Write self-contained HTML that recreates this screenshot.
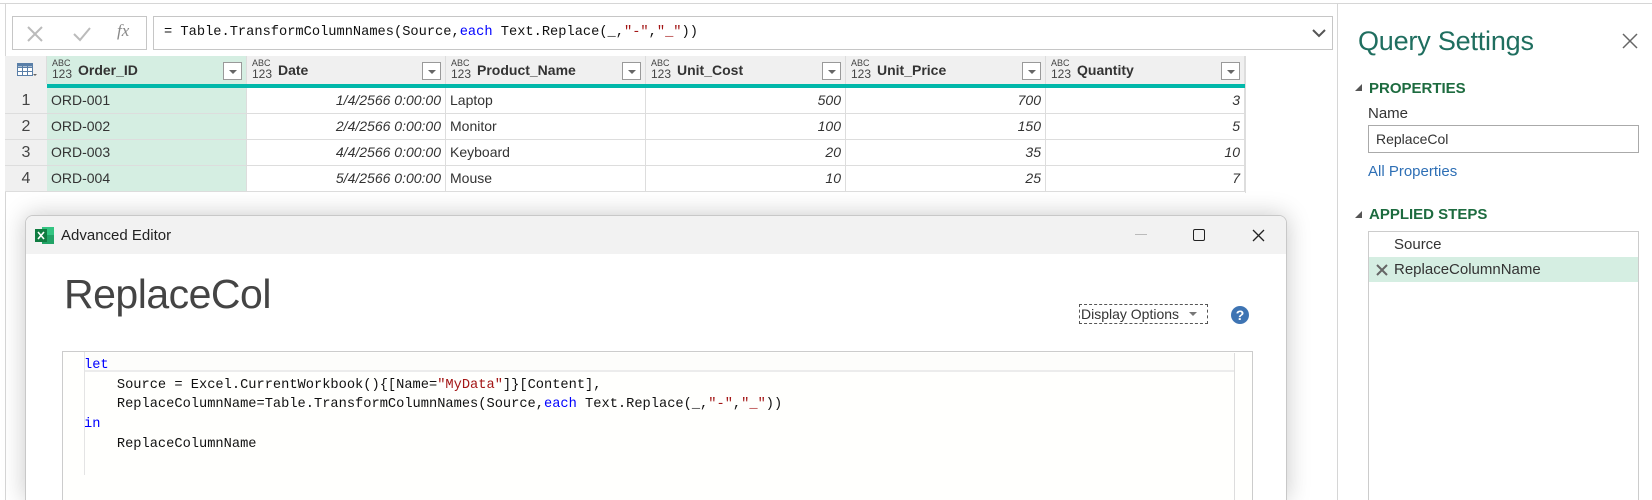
<!DOCTYPE html>
<html><head><meta charset="utf-8"><style>
*{box-sizing:border-box;margin:0;padding:0}
html,body{width:1652px;height:500px;overflow:hidden}
body{background:#fff;font-family:"Liberation Sans",sans-serif;position:relative;color:#222}
.a{position:absolute}
.mono{font-family:"Liberation Mono",monospace;font-size:13.7px;white-space:pre}
.kw{color:#0000ff}.str{color:#a31515}
.hd{position:absolute;top:56px;height:28px;background:#f0f0f0;border-right:1px solid #ddd}
.hd .t{position:absolute;left:5px;top:2px;font-size:9px;line-height:10px;color:#444}
.hd .t b{font-weight:normal;font-size:12px;line-height:12px}
.hd .n{position:absolute;left:31px;top:6px;font-weight:bold;font-size:14px;color:#333}
.hd .dd{position:absolute;right:4px;top:6px;width:19px;height:18px;border:1px solid #999;background:#fff}
.hd .dd:after{content:"";position:absolute;left:5px;top:7px;border-left:4px solid transparent;border-right:4px solid transparent;border-top:4px solid #666}
.cell{position:absolute;height:26px;border-right:1px solid #ddd;border-bottom:1px solid #ddd;font-size:14px;line-height:25px;padding:0 4px;color:#333}
.r{text-align:right;font-style:italic}
.rn{position:absolute;left:5px;width:42px;height:26px;background:#f0f0f0;border-bottom:1px solid #ddd;text-align:center;font-size:16px;line-height:26px;color:#444}
</style></head><body>
<div class="a" style="left:0;top:3px;width:1652px;height:1px;background:#d6d6d6"></div>
<div class="a" style="left:5px;top:3px;width:1px;height:497px;background:#d6d6d6"></div>
<div class="a" style="left:1337px;top:3px;width:1px;height:497px;background:#d6d6d6"></div>

<div class="a" style="left:12px;top:16px;width:135px;height:34px;border:1px solid #c6c6c6"></div>
<svg class="a" style="left:25px;top:24px" width="20" height="20"><path d="M3 3L17 17M17 3L3 17" stroke="#bbb" stroke-width="2"/></svg>
<svg class="a" style="left:72px;top:24px" width="20" height="20"><path d="M2 10L8 16L18 4" stroke="#bbb" stroke-width="2" fill="none"/></svg>
<div class="a" style="left:117px;top:21px;font-family:'Liberation Serif',serif;font-style:italic;font-size:17px;color:#888">fx</div>
<div class="a" style="left:153px;top:16px;width:1180px;height:34px;border:1px solid #c6c6c6"></div>
<div class="a mono" style="left:164px;top:25px;color:#111">= Table.TransformColumnNames(Source,<span class="kw">each</span> Text.Replace(_,<span class="str">"-"</span>,<span class="str">"_"</span>))</div>
<svg class="a" style="left:1311px;top:28px" width="16" height="10"><path d="M2 2L8 8L14 2" stroke="#555" stroke-width="2" fill="none"/></svg>

<div class="hd" style="left:5px;width:42px;border-right:1px solid #ddd">
<svg style="position:absolute;left:12px;top:7px" width="22" height="16"><rect x="0.5" y="0.5" width="15" height="12" fill="#fff" stroke="#5a7fa8"/><path d="M0.5 4.5H15.5M0.5 8.5H15.5M5.5 0.5V12.5M10.5 0.5V12.5" stroke="#5a7fa8"/><rect x="0.5" y="0.5" width="15" height="3" fill="#5a7fa8"/><path d="M16 11L20 11L18 13Z" fill="#666"/></svg></div>
<div class="hd" style="left:47px;width:200px;background:#d5eee2"><div class="t">ABC<br><b>123</b></div><div class="n">Order_ID</div><div class="dd"></div></div>
<div class="hd" style="left:247px;width:199px"><div class="t">ABC<br><b>123</b></div><div class="n">Date</div><div class="dd"></div></div>
<div class="hd" style="left:446px;width:200px"><div class="t">ABC<br><b>123</b></div><div class="n">Product_Name</div><div class="dd"></div></div>
<div class="hd" style="left:646px;width:200px"><div class="t">ABC<br><b>123</b></div><div class="n">Unit_Cost</div><div class="dd"></div></div>
<div class="hd" style="left:846px;width:200px"><div class="t">ABC<br><b>123</b></div><div class="n">Unit_Price</div><div class="dd"></div></div>
<div class="hd" style="left:1046px;width:199px"><div class="t">ABC<br><b>123</b></div><div class="n">Quantity</div><div class="dd"></div></div>
<div class="a" style="left:5px;top:84px;width:42px;height:4px;background:#f0f0f0"></div>
<div class="a" style="left:47px;top:84px;width:1198px;height:4px;background:#01b8aa"></div>
<div class="a" style="left:1245px;top:56px;width:1px;height:137px;background:#ddd"></div>

<div class="rn" style="top:88px">1</div><div class="rn" style="top:114px">2</div><div class="rn" style="top:140px">3</div><div class="rn" style="top:166px">4</div>

<div class="cell" style="left:47px;top:88px;width:200px;background:#d5eee2">ORD-001</div>
<div class="cell" style="left:47px;top:114px;width:200px;background:#d5eee2">ORD-002</div>
<div class="cell" style="left:47px;top:140px;width:200px;background:#d5eee2">ORD-003</div>
<div class="cell" style="left:47px;top:166px;width:200px;background:#d5eee2">ORD-004</div>
<div class="cell r" style="left:247px;top:88px;width:199px">1/4/2566 0:00:00</div>
<div class="cell r" style="left:247px;top:114px;width:199px">2/4/2566 0:00:00</div>
<div class="cell r" style="left:247px;top:140px;width:199px">4/4/2566 0:00:00</div>
<div class="cell r" style="left:247px;top:166px;width:199px">5/4/2566 0:00:00</div>
<div class="cell" style="left:446px;top:88px;width:200px">Laptop</div>
<div class="cell" style="left:446px;top:114px;width:200px">Monitor</div>
<div class="cell" style="left:446px;top:140px;width:200px">Keyboard</div>
<div class="cell" style="left:446px;top:166px;width:200px">Mouse</div>
<div class="cell r" style="left:646px;top:88px;width:200px">500</div>
<div class="cell r" style="left:646px;top:114px;width:200px">100</div>
<div class="cell r" style="left:646px;top:140px;width:200px">20</div>
<div class="cell r" style="left:646px;top:166px;width:200px">10</div>
<div class="cell r" style="left:846px;top:88px;width:200px">700</div>
<div class="cell r" style="left:846px;top:114px;width:200px">150</div>
<div class="cell r" style="left:846px;top:140px;width:200px">35</div>
<div class="cell r" style="left:846px;top:166px;width:200px">25</div>
<div class="cell r" style="left:1046px;top:88px;width:199px">3</div>
<div class="cell r" style="left:1046px;top:114px;width:199px">5</div>
<div class="cell r" style="left:1046px;top:140px;width:199px">10</div>
<div class="cell r" style="left:1046px;top:166px;width:199px">7</div>

<div class="a" style="left:1358px;top:26px;font-size:27px;color:#1f6e5f;letter-spacing:-0.2px">Query Settings</div>
<svg class="a" style="left:1622px;top:33px" width="16" height="16"><path d="M1 1L15 15M15 1L1 15" stroke="#666" stroke-width="1.5"/></svg>
<div class="a" style="left:1355px;top:84px;border-left:7px solid transparent;border-bottom:7px solid #555"></div>
<div class="a" style="left:1369px;top:80px;font-weight:bold;font-size:15px;color:#1d6b3f">PROPERTIES</div>
<div class="a" style="left:1368px;top:105px;font-size:15px;color:#333">Name</div>
<div class="a" style="left:1368px;top:125px;width:271px;height:28px;border:1px solid #aaa;padding:5px 7px;font-size:14px;color:#333">ReplaceCol</div>
<div class="a" style="left:1368px;top:163px;font-size:15px;color:#2e6fb5">All Properties</div>
<div class="a" style="left:1355px;top:211px;border-left:7px solid transparent;border-bottom:7px solid #555"></div>
<div class="a" style="left:1369px;top:206px;font-weight:bold;font-size:15px;color:#1d6b3f">APPLIED STEPS</div>
<div class="a" style="left:1368px;top:231px;width:271px;height:269px;border:1px solid #ccc;border-bottom:none"></div>
<div class="a" style="left:1394px;top:236px;font-size:15px;color:#333">Source</div>
<div class="a" style="left:1369px;top:257px;width:269px;height:25px;background:#d5eee2"></div>
<svg class="a" style="left:1375px;top:263px" width="14" height="14"><path d="M2 2L12 12M12 2L2 12" stroke="#666" stroke-width="2"/></svg>
<div class="a" style="left:1394px;top:261px;font-size:15px;color:#333">ReplaceColumnName</div>

<div class="a" style="left:25px;top:215px;width:1262px;height:285px;background:#fff;border:1px solid #c8c8c8;border-bottom:none;border-radius:8px 8px 0 0;box-shadow:0 0 24px rgba(0,0,0,0.22);overflow:hidden">
 <div class="a" style="left:0;top:0;width:1262px;height:38px;background:#f2f2f2"></div>
 <svg class="a" style="left:9px;top:10px" width="20" height="19"><rect x="7" y="1" width="12" height="17" fill="#21a366"/><rect x="7" y="1" width="12" height="8" fill="#33c481"/><rect x="0" y="3" width="12" height="13" fill="#107c41"/><path d="M3 6L9 13M9 6L3 13" stroke="#fff" stroke-width="1.6"/></svg>
 <div class="a" style="left:35px;top:11px;font-size:15px;color:#222">Advanced Editor</div>
 <div class="a" style="left:1109px;top:18px;width:12px;height:1px;background:#bbb"></div>
 <div class="a" style="left:1167px;top:13px;width:12px;height:12px;border:1.5px solid #222;border-radius:2px"></div>
 <svg class="a" style="left:1226px;top:13px" width="13" height="13"><path d="M1 1L12 12M12 1L1 12" stroke="#222" stroke-width="1.3"/></svg>
 <div class="a" style="left:38px;top:55px;font-size:41px;color:#444;letter-spacing:-0.5px">ReplaceCol</div>
 <div class="a" style="left:1053px;top:88px;width:129px;height:20px;border:1px dashed #555;font-size:14px;line-height:18px;padding-left:1px;color:#333">Display Options</div>
 <div class="a" style="left:1163px;top:96px;border-left:4px solid transparent;border-right:4px solid transparent;border-top:4px solid #777"></div>
 <div class="a" style="left:1205px;top:90px;width:18px;height:18px;border-radius:50%;background:#3e74b3;color:#fff;font-weight:bold;font-size:14px;line-height:18px;text-align:center">?</div>
 <div class="a" style="left:36px;top:135px;width:1191px;height:150px;border:1px solid #ccc;border-bottom:none;background:#fffffd">
  <div class="a" style="left:22px;top:1px;width:1149px;height:19px;background:#fdfdfb;border-bottom:2px solid #ececec"></div>
  <div class="a" style="left:21px;top:0;width:1px;height:123px;background:#e4e4e4"></div>
  <div class="a" style="left:1171px;top:1px;width:1px;height:150px;background:#ddd"></div>
  <div class="a mono" style="left:21px;top:4px;line-height:19.7px;color:#111"><span class="kw">let</span>
    Source = Excel.CurrentWorkbook(){[Name=<span class="str">"MyData"</span>]}[Content],
    ReplaceColumnName=Table.TransformColumnNames(Source,<span class="kw">each</span> Text.Replace(_,<span class="str">"-"</span>,<span class="str">"_"</span>))
<span class="kw">in</span>
    ReplaceColumnName</div>
 </div>
</div>
</body></html>
